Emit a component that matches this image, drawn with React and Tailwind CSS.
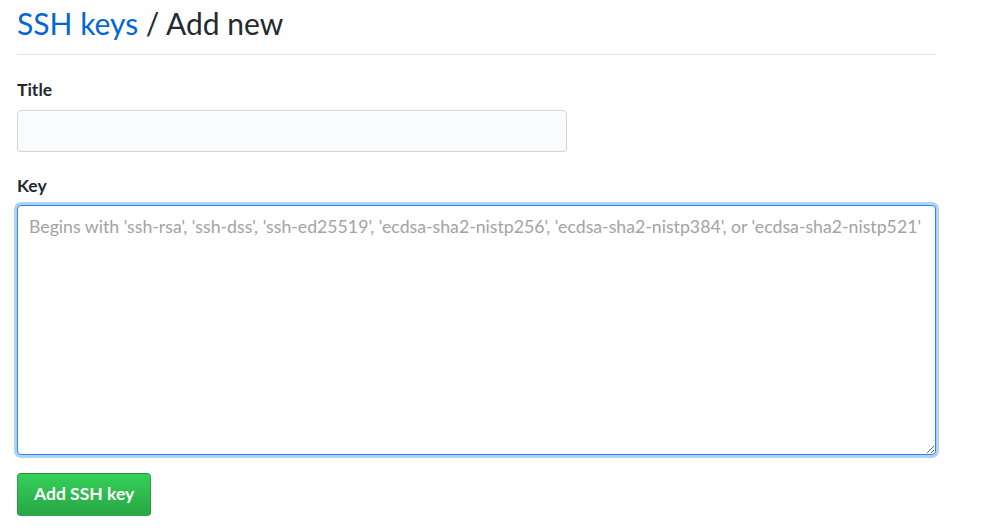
import React from "react";

export default function App() {
  const font = { fontFamily: "Lato, 'Noto Sans', sans-serif" };

  return (
    <div className="min-h-screen bg-white text-[#24292e]" style={font}>
      <div className="pl-[17px] w-[936px]">
        <div className="pt-[4px] pb-[12px] border-b border-[#e1e4e8]">
          <h2 className="text-[30px] leading-[38px] font-normal">
            <a href="#" className="text-[#0366d6]">SSH keys</a> / Add new
          </h2>
        </div>

        <form onSubmit={e => e.preventDefault()}>
          <div className="mt-[24px]">
            <label className="block text-[17.5px] leading-[22px] font-bold mb-[9px]">Title</label>
            <input
              type="text"
              className="block w-[550px] h-[42px] px-[10px] bg-[#fafbfc] border border-[#d1d5da] rounded-[4px] text-[17.5px] outline-none"
            />
          </div>

          <div className="mt-[23px]">
            <label className="block text-[17.5px] leading-[22px] font-bold mb-[8px]">Key</label>
            <textarea
              placeholder="Begins with 'ssh-rsa', 'ssh-dss', 'ssh-ed25519', 'ecdsa-sha2-nistp256', 'ecdsa-sha2-nistp384', or 'ecdsa-sha2-nistp521'"
              className="block w-[919px] h-[250px] px-[11px] py-[10px] bg-white border border-[#2188ff] rounded-[4px] shadow-[0_0_0_3px_rgba(3,102,214,0.3)] text-[17.7px] leading-[22px] outline-none placeholder:text-[#a3a3a3]"
            />
          </div>

          <button
            type="submit"
            className="mt-[18px] h-[43px] px-[16px] text-white text-[17.5px] font-bold rounded-[4px] border border-[rgba(27,31,35,0.2)] bg-gradient-to-b from-[#34d058] to-[#28a745]"
          >
            Add SSH key
          </button>
        </form>
      </div>
    </div>
  );
}
